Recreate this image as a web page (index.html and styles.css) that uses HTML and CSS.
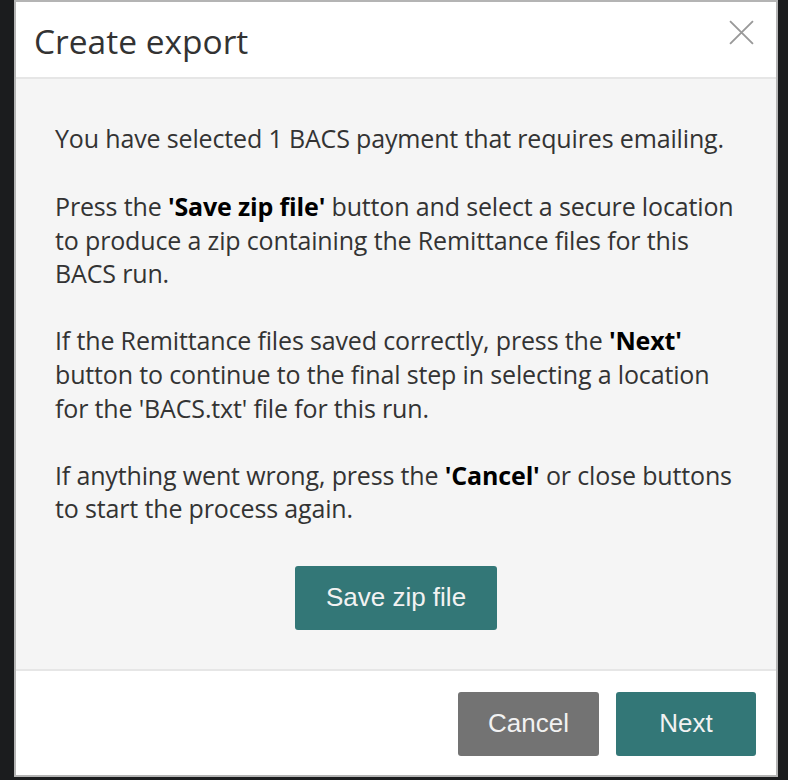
FILE: index.html
```html
<!DOCTYPE html>
<html lang="en">
<head>
<meta charset="utf-8">
<title>Create export</title>
<link rel="stylesheet" href="styles.css">
</head>
<body>
<div class="backdrop">
  <div class="dialog">
    <div class="dialog-header">
      <h1 class="dialog-title">Create export</h1>
      <button class="close-btn" aria-label="Close">
        <svg viewBox="0 0 24 24" width="25" height="25"><path d="M1 1 L23 23 M23 1 L1 23" stroke="#999" stroke-width="1.8" fill="none"/></svg>
      </button>
    </div>
    <div class="dialog-body">
      <p>You have selected 1 BACS payment that requires emailing.</p>
      <p>Press the <strong>'Save zip file'</strong> button and select a secure location to produce a zip containing the Remittance files for this BACS run.</p>
      <p>If the Remittance files saved correctly, press the <strong>'Next'</strong> button to continue to the final step in selecting a location for the 'BACS.txt' file for this run.</p>
      <p>If anything went wrong, press the <strong>'Cancel'</strong> or close buttons to start the process again.</p>
      <div class="save-row">
        <button class="btn btn-primary btn-save">Save zip file</button>
      </div>
    </div>
    <div class="dialog-footer">
      <button class="btn btn-secondary">Cancel</button>
      <button class="btn btn-primary">Next</button>
    </div>
  </div>
</div>
</body>
</html>
```

FILE: styles.css
```css
html, body {
  margin: 0;
  padding: 0;
  background: #1b1c1e;
}

.backdrop {
  padding: 0 10px 3px 14px;
}

.dialog {
  width: 760px;
  border: 2px solid #b4b4b4;
  background: #fff;
  font-family: "Open Sans", "Noto Sans", sans-serif;
  color: #333;
}

.dialog-header {
  height: 75px;
  border-bottom: 2px solid #e6e6e6;
  display: flex;
  align-items: center;
  justify-content: space-between;
  padding: 0 22px 0 18px;
}

.dialog-title {
  margin: 5px 0 0 0;
  font-size: 33.5px;
  font-weight: 400;
  color: #333;
  line-height: 1;
}

.close-btn {
  background: none;
  border: 0;
  padding: 0;
  margin-top: -14px;
  display: flex;
  cursor: pointer;
}

.dialog-body {
  background: #f5f5f5;
  padding: 43px 39px 39px 39px;
  border-bottom: 2px solid #e6e6e6;
  font-size: 25px;
  letter-spacing: -0.15px;
  line-height: 33.6px;
}

.dialog-body p {
  margin: 0 0 33.6px 0;
}

.dialog-body p:first-child {
  margin-bottom: 34.4px;
}

.dialog-body strong {
  color: #000;
  font-weight: 700;
}

.save-row {
  display: flex;
  justify-content: center;
  padding-top: 6px;
}

.btn {
  font-family: "Liberation Sans", Arial, sans-serif;
  font-size: 26px;
  letter-spacing: 0;
  color: #f2f2f2;
  border: 0;
  border-radius: 3px;
  height: 64px;
  padding: 0;
  cursor: pointer;
}

.btn-primary {
  background: #337777;
  width: 140px;
}

.btn-save {
  width: 202px;
}

.btn-secondary {
  background: #737373;
  width: 141px;
}

.dialog-footer {
  display: flex;
  justify-content: flex-end;
  gap: 17px;
  padding: 21px 20px 19px 20px;
}
```
